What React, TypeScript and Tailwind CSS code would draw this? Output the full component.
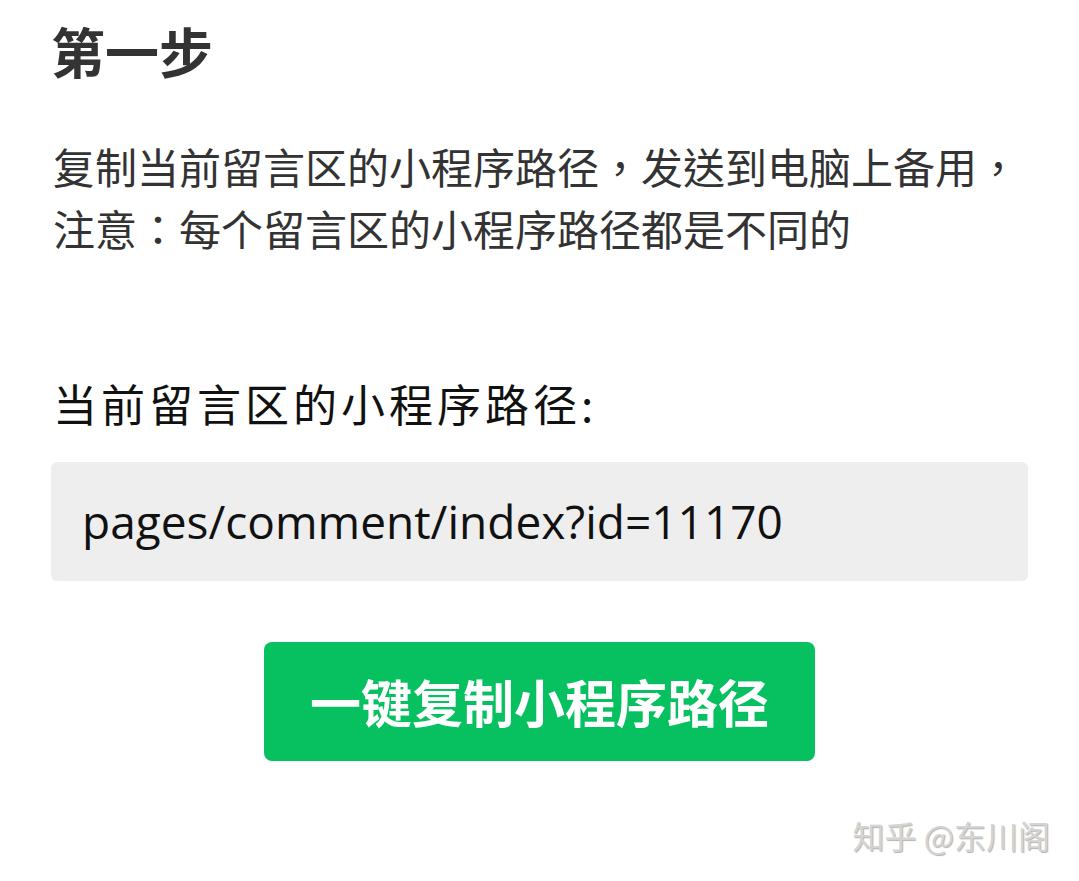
import React from "react";

const cjk = '"Noto Sans CJK SC", "Noto Sans", sans-serif';
const cjkCentered = '"Noto Sans CJK TC", "Noto Sans CJK SC", sans-serif';

export default function App() {
  return (
    <div
      className="relative w-[1079px] h-[881px] bg-white overflow-hidden"
      style={{ fontFamily: cjk }}
    >
      <div className="flex flex-col px-[51px] pt-[21px]">
        <h1 className="text-[54px] leading-[60px] font-bold text-[#333333]">
          第一步
        </h1>

        <p
          className="pl-[2px] mt-[54px] text-[42px] leading-[62px] text-[#333333]"
          style={{ fontFamily: cjkCentered }}
        >
          复制当前留言区的小程序路径，发送到电脑上备用，
          <br />
          注意：每个留言区的小程序路径都是不同的
        </p>

        <div className="pl-[2px] mt-[116px] text-[44px] leading-[56px] tracking-[4px] text-[#111111]">
          当前留言区的小程序路径:
        </div>

        <div className="mt-[31px] h-[119px] rounded-[6px] bg-[#eeeeee] flex items-center pl-[31px]">
          <span
            className="text-[46px] text-[#111111]"
            style={{ fontFamily: '"Open Sans", "Noto Sans", sans-serif' }}
          >
            pages/comment/index?id=11170
          </span>
        </div>

        <div className="mt-[61px] flex justify-center">
          <button className="w-[551px] h-[119px] rounded-[8px] bg-[#07c160] text-white text-[51px] font-bold flex items-center justify-center">
            一键复制小程序路径
          </button>
        </div>
      </div>

      <div
        className="absolute right-[29px] top-[814px] text-[32px] leading-[42px] text-[#d4d4d4]"
        style={{ textShadow: "1px 1px 1px rgba(0,0,0,0.3)" }}
      >
        知乎 @东川阁
      </div>
    </div>
  );
}
